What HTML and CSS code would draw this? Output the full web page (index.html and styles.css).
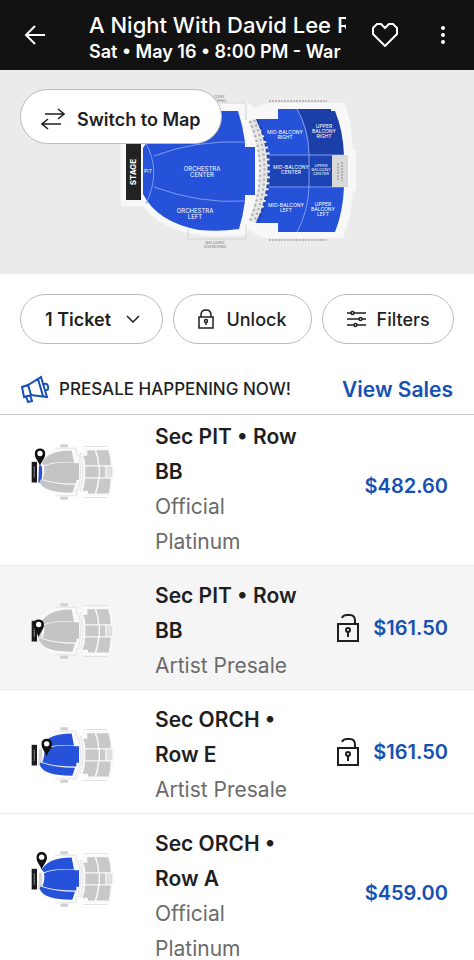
FILE: index.html
```html
<!DOCTYPE html>
<html lang="en">
<head>
  <meta charset="UTF-8">
  <meta name="viewport" content="width=device-width, initial-scale=1">
  <title>A Night With David Lee R</title>
  <link rel="stylesheet" href="styles.css">
</head>
<body>

  <!-- Shared drawings -->
  <svg class="sprite" aria-hidden="true">
    <symbol id="mini-map" viewBox="84 42 270 210">
      <path class="shell" d="M118 118 Q135 80 185 76 H224 L248 90 V76 H328 Q338 100 339 130 H344 V168 H339 Q338 200 330 221 H248 V208 L224 220 H185 Q130 212 114 178 Z"/>
      <path class="trace" d="M165 77 H229 V98 M250 72 H322 M165 220 H229 V200 M250 225 H322"/>
      <path class="caption" d="M181 70 H204 M181 227 H204"/>
      <rect class="stage" x="95" y="118" width="16" height="62"/>
      <path class="stage-text" d="M103 133 V166"/>
      <path class="pit" d="M117 130 H125 Q129 150 123 180 H115 Z"/>
      <g class="orchestra">
        <path d="M125 121 Q145 84 215 84 L222 120 Q172 114 132 128 Z"/>
        <path d="M132 131 Q170 116 228 122 H237 V172 H229 V183 Q170 184 127 170 Q136 150 132 131 Z"/>
        <path d="M121 171 Q168 187 225 187 L217 211 Q130 211 119 178 Z"/>
      </g>
      <path class="rail" d="M234 95 Q250 145 234 205 M241 93 Q256 145 241 205"/>
      <g class="balcony">
        <path d="M249 100 H262 V83 H284 Q293 105 294 128 H256 Q256 112 249 100 Z"/>
        <path d="M256 132 H296 V164 H256 Z"/>
        <path d="M255 168 H294 Q292 192 284 213 H264 V205 H248 Q255 190 255 168 Z"/>
        <path d="M289 83 H325 Q332 105 332 128 H298 Q297 104 289 83 Z"/>
        <path d="M300 132 H316 V164 H300 Z"/>
        <path d="M298 168 H332 Q331 195 326 213 H289 Q297 192 298 168 Z"/>
      </g>
      <path class="booth" d="M320 132 H337 V164 H320 Z"/>
      <path class="trace" d="M326 138 V158 M331 138 V158"/>
    </symbol>
    <symbol id="pin" viewBox="0 0 32 54">
      <path d="M16 0 A16 16 0 0 1 32 16 C32 30 21 38 16 54 C11 38 0 30 0 16 A16 16 0 0 1 16 0 Z"/>
      <circle class="pin-hole" cx="16" cy="16" r="8"/>
    </symbol>
    <symbol id="open-lock" viewBox="0 0 22 28">
      <path d="M1 10 H21 V27 H1 Z M5 4 Q6 1 10 1 H13 Q18 1 18 7 V10"/>
      <circle cx="11" cy="16" r="2"/>
      <path d="M11 18 V23"/>
    </symbol>
  </svg>

  <div class="app">
    <header class="topbar">
      <button class="icon-button" type="button" aria-label="Back">
        <svg width="22" height="22" viewBox="0 0 22 22"><path d="M21 11 H2 M11 2 L2 11 L11 20"/></svg>
      </button>
      <div class="event">
        <h1>A Night With David Lee R</h1>
        <p>Sat • May 16 • 8:00 PM - War</p>
      </div>
      <button class="icon-button" type="button" aria-label="Favorite">
        <svg width="26" height="24" viewBox="0 0 26 24"><path d="M13 5 L17 1 H21 L25 5 V11 L13 23 L1 11 V5 L5 1 H9 Z"/></svg>
      </button>
      <button class="icon-button" type="button" aria-label="More">
        <svg class="dots" width="6" height="20" viewBox="0 0 6 20"><circle cx="3" cy="3" r="2"/><circle cx="3" cy="10" r="2"/><circle cx="3" cy="17" r="2"/></svg>
      </button>
    </header>

    <!-- Seat map -->
    <section class="map">
      <svg class="seat-map" width="238" height="170" viewBox="118 88 238 170" role="img" aria-label="Seat map">
        <path class="map-shell" d="M121 140 H141 Q160 108 205 102 H248 L254 108 L268 103 H345 Q352 126 353 150 H356 V191 H353 Q351 220 343 238 H262 L250 230 L244 236 H205 Q160 230 143 206 H121 Z"/>
        <path class="map-trace" d="M188 229 V239 H246 V224 M188 112 V103 H246 V120"/>
        <rect class="map-stage" x="126" y="141" width="15" height="59"/>
        <path class="map-blue" d="M143 148 Q165 111 210 111 H238 Q243 126 245 142 V147 H255 V195 H245 V201 Q243 216 239 229 Q220 232 199 230 Q157 222 143 194 Z"/>
        <path class="map-line" d="M145 142 Q162 170 146 204 M154 156 Q195 140 245 142 M154 187 Q200 204 245 201"/>
        <path class="map-blue" d="M254 119 H278 V109 H297 Q308 130 309 155 H270 Q265 133 254 119 Z"/>
        <path class="map-deep" d="M297 109 H331 V111 H335 Q343 130 344 155 H309 Q308 130 297 109 Z"/>
        <path class="map-dark" d="M269 155 H332 V187 H269 Q271 171 269 155 Z"/>
        <path class="map-blue" d="M269 187 H344 Q343 212 335 232 H278 V223 H254 Q266 208 269 187 Z"/>
        <path class="map-line" d="M297 109 Q309 130 309 155 V187 Q308 212 297 232 M268 155 H344 M268 187 H344"/>
        <path class="map-rail" d="M252 120 Q275 170 252 222"/>
        <path class="map-seats" d="M258 120 Q280 170 258 222"/>
        <path class="map-numbers" d="M250 121 Q270 170 250 221 M254 120 Q275 170 254 222"/>
        <rect class="map-booth" x="332" y="155" width="16" height="32"/>
        <path class="map-fine" d="M338 163 V180 M342 162 V181"/>
        <path class="map-fine" d="M269 101 H327 M269 240 H327"/>
        <g class="map-labels">
          <text x="148" y="173">PIT</text>
          <g class="large">
            <text x="202" y="171">ORCHESTRA</text><text x="202" y="177">CENTER</text>
            <text x="195" y="213">ORCHESTRA</text><text x="195" y="219">LEFT</text>
          </g>
          <text x="285" y="134">MID-BALCONY</text><text x="285" y="139">RIGHT</text>
          <text x="324" y="128">UPPER</text><text x="324" y="133">BALCONY</text><text x="324" y="138">RIGHT</text>
          <text x="291" y="169">MID-BALCONY</text><text x="291" y="174">CENTER</text>
          <text class="small" x="321" y="167">UPPER</text><text class="small" x="321" y="171">BALCONY</text><text class="small" x="321" y="175">CENTER</text>
          <text x="286" y="207">MID-BALCONY</text><text x="286" y="212">LEFT</text>
          <text x="323" y="206">UPPER</text><text x="323" y="211">BALCONY</text><text x="323" y="216">LEFT</text>
        </g>
        <g class="map-notes">
          <text x="215" y="98">BALCONY</text><text x="215" y="102">OVERHANG</text>
          <text x="215" y="244">BALCONY</text><text x="215" y="248">OVERHANG</text>
        </g>
        <text class="stage-label" transform="translate(136 172) rotate(-90)">STAGE</text>
      </svg>
      <button class="pill switch" type="button">
        <svg width="24" height="22" viewBox="0 0 24 22"><path d="M4 6 H23 M17 1 L23 6 L17 11 M20 16 H1 M7 11 L1 16 L7 21"/></svg>
        Switch to Map
      </button>
    </section>

    <!-- Filters -->
    <div class="filters">
      <div class="pill ticket">
        <select aria-label="Number of tickets">
          <option>1 Ticket</option>
          <option>2 Tickets</option>
          <option>3 Tickets</option>
          <option>4 Tickets</option>
        </select>
        <svg width="14" height="8" viewBox="0 0 14 8"><path d="M1 1 L7 7 L13 1"/></svg>
      </div>
      <button class="pill" type="button">
        <svg width="16" height="20" viewBox="0 0 16 20"><path d="M1 8 H15 V19 H1 Z M3 8 V6 Q3 1 8 1 Q13 1 13 6 V8 M8 13 V16"/><circle cx="8" cy="12" r="1.5"/></svg>
        Unlock
      </button>
      <button class="pill filter-button" type="button">
        <svg width="20" height="18" viewBox="0 0 20 18"><path d="M0 3 H4 M7 3 H19 M0 9 H12 M15 9 H19 M0 15 H7 M10 15 H19"/><circle cx="5.500" cy="3" r="1.500"/><circle cx="13.500" cy="9" r="1.500"/><circle cx="8.500" cy="15" r="1.500"/></svg>
        Filters
      </button>
    </div>

    <div class="presale">
      <svg width="28" height="28" viewBox="0 0 28 28"><path d="M1 12 L7 10 L20 2 L26 22 L10 20 L3 22 Z M7 10 L10 20 M17 4 L22 21 M5 21 L7 27 L11 26 L9 20 M23 9 Q27 8 27 12 Q28 15 25 15"/></svg>
      <span>PRESALE HAPPENING NOW!</span>
      <a href="#sales">View Sales</a>
    </div>

    <!-- Tickets -->
    <main class="list">
      <ul class="tickets">
        <li class="ticket-row">
          <svg class="thumb in-pit" viewBox="0 0 270 210"><use href="#mini-map" width="270" height="210"/><use href="#pin" x="20" y="35" width="32" height="54"/></svg>
          <div class="details"><h2>Sec PIT • Row BB</h2><p>Official Platinum</p></div>
          <div class="price">$482.60</div>
        </li>
        <li class="ticket-row selected">
          <svg class="thumb" viewBox="0 0 270 210"><use href="#mini-map" width="270" height="210"/><use href="#pin" x="16" y="71" width="32" height="54"/></svg>
          <div class="details"><h2>Sec PIT • Row BB</h2><p>Artist Presale</p></div>
          <div class="price"><svg class="lock" width="22" height="28"><use href="#open-lock"/></svg>$161.50</div>
        </li>
        <li class="ticket-row">
          <svg class="thumb in-orchestra" viewBox="0 0 270 210"><use href="#mini-map" width="270" height="210"/><use href="#pin" x="40" y="57" width="32" height="54"/></svg>
          <div class="details"><h2>Sec ORCH • Row E</h2><p>Artist Presale</p></div>
          <div class="price"><svg class="lock" width="22" height="28"><use href="#open-lock"/></svg>$161.50</div>
        </li>
        <li class="ticket-row">
          <svg class="thumb in-orchestra" viewBox="0 0 270 210"><use href="#mini-map" width="270" height="210"/><use href="#pin" x="25" y="25" width="32" height="54"/></svg>
          <div class="details"><h2>Sec ORCH • Row A</h2><p>Official Platinum</p></div>
          <div class="price">$459.00</div>
        </li>
      </ul>
    </main>
  </div>

</body>
</html>
```

FILE: styles.css
```css
* {
  box-sizing: border-box;
}

body {
  margin: 0;
  font-family: Inter, "Liberation Sans", sans-serif;
  color: #1f1f1f;
  background-color: #fff;
}

h1, h2, p, ul {
  margin: 0;
  padding: 0;
}

button, select {
  font: inherit;
  color: inherit;
}

svg {
  fill: none;
  stroke: currentColor;
  flex-shrink: 0;
}

.sprite {
  display: block;
  width: 0;
  height: 0;
}

.app {
  display: flex;
  flex-direction: column;
  height: 100vh;
  overflow: hidden;
}

/* Top bar */
.topbar {
  display: flex;
  align-items: center;
  height: 70px;
  flex-shrink: 0;
  padding: 0 12px 0 16px;
  color: #fff;
  background-color: #121212;
}

.icon-button {
  display: flex;
  align-items: center;
  justify-content: center;
  width: 38px;
  height: 44px;
  padding: 0;
  border: 0;
  background: none;
  stroke-width: 2;
}

.icon-button:last-child {
  margin-left: 20px;
}

.dots {
  fill: #fff;
  stroke: none;
}

.event {
  flex: 1;
  min-width: 0;
  margin: 0 20px 0 35px;
  padding-top: 5px;
  overflow: hidden;
  white-space: nowrap;
}

.event h1 {
  font-size: 22px;
  font-weight: 500;
  line-height: 28px;
}

.event p {
  font-size: 18px;
  font-weight: 600;
  line-height: 26px;
}

/* Seat map */
.map {
  position: relative;
  display: flex;
  justify-content: center;
  flex-shrink: 0;
  height: 204px;
  padding-top: 18px;
  background-color: #ebebeb;
}

.seat-map {
  stroke: none;
}

.map-shell {
  fill: #f8f8f8;
}

.map-stage {
  fill: #222;
}

.map-blue {
  fill: #2552d9;
}

.map-dark {
  fill: #1d44b4;
}

.map-deep {
  fill: #1c3ea7;
}

.map-booth {
  fill: #d9d9d9;
}

.map-line {
  stroke: #7f9cf0;
  stroke-width: 1;
}

.map-trace {
  stroke: #d4d4d4;
}

.map-rail {
  stroke: #e6e6e6;
  stroke-width: 8;
}

.map-seats {
  stroke: #2448b5;
  stroke-width: 3;
  stroke-dasharray: 4 2;
}

.map-numbers {
  stroke: #aaa;
  stroke-width: 2;
  stroke-dasharray: 2 3;
}

.map-fine {
  stroke: #888;
  stroke-dasharray: 2 1;
}

.map-labels {
  fill: #fff;
  font-size: 5px;
  text-anchor: middle;
}

.map-labels .large {
  font-size: 6px;
}

.map-labels .small {
  font-size: 4px;
}

.map-notes {
  fill: #777;
  font-size: 4px;
  text-anchor: middle;
}

.stage-label {
  fill: #fff;
  font-size: 8px;
  font-weight: 700;
  text-anchor: middle;
}

/* Pills */
.pill {
  display: flex;
  align-items: center;
  justify-content: center;
  gap: 12px;
  height: 50px;
  padding: 0;
  border: 1px solid #bbb;
  border-radius: 25px;
  background-color: #fff;
  font-size: 18px;
  font-weight: 500;
  white-space: nowrap;
}

.pill svg {
  stroke-width: 1.5;
}

.switch {
  position: absolute;
  top: 19px;
  left: 20px;
  height: 55px;
  padding: 5px 20px 0;
  border-radius: 28px;
  font-weight: 600;
}

.filters {
  display: grid;
  grid-template-columns: 143fr 140fr 132fr;
  gap: 10px;
  flex-shrink: 0;
  padding: 20px 20px 0;
}

.filter-button {
  gap: 10px;
}

.pill.ticket {
  position: relative;
}

.ticket select {
  width: 100%;
  height: 100%;
  padding: 0 24px;
  border: 0;
  border-radius: 25px;
  background: none;
  font-weight: 600;
  appearance: none;
}

.ticket svg {
  position: absolute;
  right: 22px;
  pointer-events: none;
}

/* Presale */
.presale {
  display: flex;
  align-items: center;
  flex-shrink: 0;
  gap: 10px;
  height: 71px;
  padding: 20px 21px 0;
  border-bottom: 1px solid #ccc;
  font-size: 17px;
  font-weight: 500;
  white-space: nowrap;
}

.presale svg {
  color: #1550b3;
  stroke-width: 2;
}

.presale a {
  margin-left: auto;
  color: #1550b3;
  font-size: 21px;
  font-weight: 600;
  text-decoration: none;
}

/* Ticket list */
.list {
  flex: 1;
  min-height: 0;
  overflow: hidden;
}

.tickets {
  margin-top: -8px;
  list-style: none;
}

.ticket-row {
  display: grid;
  grid-template-columns: 90px 150px 1fr;
  column-gap: 37px;
  align-items: center;
  padding: 12px 26px 6px 28px;
  border-bottom: 1px solid #ebebeb;
}

.ticket-row.selected {
  background-color: #f5f5f5;
}

.details {
  font-size: 21px;
  line-height: 35px;
}

.details h2 {
  font-size: 21px;
  font-weight: 600;
}

.details p {
  color: #6b6b6b;
}

.price {
  display: flex;
  align-items: center;
  justify-content: flex-end;
  gap: 14px;
  margin-left: -37px;
  padding-bottom: 6px;
  color: #1550b3;
  font-size: 20px;
  font-weight: 600;
}

.lock {
  color: #1f1f1f;
  stroke-width: 2;
}

/* Thumbnails */
.thumb {
  align-self: start;
  width: 90px;
  height: 105px;
  stroke: none;
  fill: #111;
  --pit: #d5d5d5;
  --orchestra: #c4c4c4;
}

.in-pit {
  --pit: #2552d9;
}

.in-orchestra {
  --orchestra: #2552d9;
}

.shell {
  fill: #fafafa;
}

.trace {
  fill: none;
  stroke: #e2e2e2;
  stroke-width: 3;
}

.caption {
  stroke: #d0d0d0;
  stroke-width: 9;
}

.stage {
  fill: #1a1a1a;
}

.stage-text {
  stroke: #888;
  stroke-width: 4;
  stroke-dasharray: 4 2;
}

.pit {
  fill: var(--pit);
}

.orchestra {
  fill: var(--orchestra);
}

.rail {
  fill: none;
  stroke: #dedede;
  stroke-width: 4;
  stroke-dasharray: 5 3;
}

.balcony {
  fill: #c8c8c8;
}

.booth {
  fill: #ddd;
}

.pin-hole {
  fill: #fff;
}
```
